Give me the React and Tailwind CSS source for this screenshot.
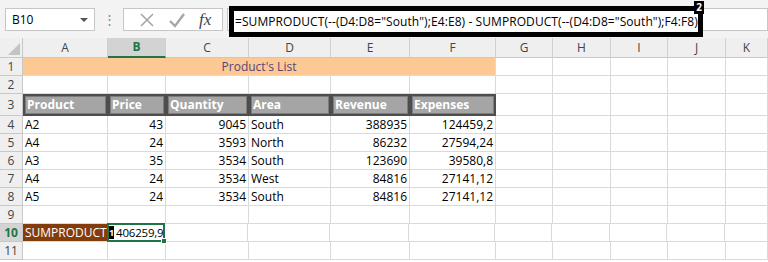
import React from 'react';

const colW = ['w-[85px]', 'w-[58px]', 'w-[83px]', 'w-[82px]', 'w-[79px]', 'w-[86px]', 'w-[57px]', 'w-[58px]', 'w-[57px]', 'w-[58px]', 'flex-1'];
const letters = ['A', 'B', 'C', 'D', 'E', 'F', 'G', 'H', 'I', 'J', 'K'];

const head = ['Product', 'Price', 'Quantity', 'Area', 'Revenue', 'Expenses'];
const data = [
  ['A2', '43', '9045', 'South', '388935', '124459,2'],
  ['A4', '24', '3593', 'North', '86232', '27594,24'],
  ['A3', '35', '3534', 'South', '123690', '39580,8'],
  ['A4', '24', '3534', 'West', '84816', '27141,12'],
  ['A5', '24', '3534', 'South', '84816', '27141,12'],
];
// text columns are left aligned, numbers right
const leftCol = [true, false, false, true, false, false];

const RowHead = ({ n, h = 'h-[18px]', active }) => (
  <div
    className={`w-[23px] shrink-0 ${h} flex items-center justify-center border-r border-b border-[#c8c8c8] text-[12px] ${
      active ? 'bg-[#d3d3d3] text-[#217346] font-bold' : 'bg-[#efefef] text-[#444]'
    }`}
  >
    {n}
  </div>
);

const Blank = ({ i }) => <div className={`${colW[i]} shrink-0 border-r border-b border-[#dadada]`} />;

export default function App() {
  return (
    <div className="w-[768px] h-[262px] overflow-hidden bg-white text-black" style={{ fontFamily: '"Open Sans", "Liberation Sans", sans-serif' }}>
      {/* formula bar area */}
      <div className="h-[38px] bg-[#f3f3f3] flex items-start pt-[8px] pl-[5px] relative">
        <div className="w-[90px] h-[23px] bg-white border border-[#c6c6c6] flex items-center justify-between pl-[6px] pr-[4px] text-[12px]">
          <span>B10</span>
          <span className="w-0 h-0 border-l-[4px] border-r-[4px] border-t-[4px] border-l-transparent border-r-transparent border-t-[#555] mr-[2px]" />
        </div>
        <div className="w-[28px] h-[23px] flex items-center justify-center text-[#888] text-[13px] leading-none">⋮</div>
        <div className="w-[100px] h-[23px] bg-white border border-[#c6c6c6] flex items-center justify-around pl-[8px] pr-[4px]">
          <svg width="16" height="16" viewBox="0 0 16 16">
            <path d="M2 2 L14 14 M14 2 L2 14" stroke="#a6a6a6" strokeWidth="1.6" fill="none" />
          </svg>
          <svg width="18" height="16" viewBox="0 0 18 16">
            <path d="M2 9 L7 14 L16 2" stroke="#a6a6a6" strokeWidth="2.4" fill="none" />
          </svg>
          <span className="italic text-[17px] text-[#444] leading-none" style={{ fontFamily: '"Liberation Serif", serif' }}>
            fx
          </span>
        </div>
        <div className="flex-1 h-[23px] ml-[4px] bg-white border border-[#c6c6c6] relative">
          <div className="absolute left-[1px] top-[-3px] w-[474px] h-[31px] border-[5px] border-black bg-white flex items-center pl-[1px] text-[12px] tracking-[0.08px] whitespace-nowrap">
            =SUMPRODUCT(--(D4:D8="South");E4:E8) - SUMPRODUCT(--(D4:D8="South");F4:F8)
          </div>
          <div className="absolute left-[466px] top-[-8px] w-[10px] h-[13px] bg-black text-white text-[10px] leading-[13px] text-center font-bold">2</div>
        </div>
      </div>

      {/* column headers */}
      <div className="flex h-[20px]">
        <div className="w-[23px] shrink-0 bg-[#efefef] border-r border-b border-[#c8c8c8] relative">
          <svg className="absolute right-[2px] bottom-[2px]" width="12" height="12" viewBox="0 0 12 12">
            <path d="M12 0 L12 12 L0 12 Z" fill="#c4c4c4" />
          </svg>
        </div>
        {letters.map((l, i) => (
          <div
            key={l}
            className={`${colW[i]} shrink-0 flex items-center justify-center text-[12px] border-r border-[#d0d0d0] ${
              l === 'B' ? 'bg-[#d3d3d3] text-[#217346] font-bold border-b-2 border-b-[#217346]' : 'bg-[#efefef] text-[#444] border-b border-b-[#c8c8c8]'
            }`}
          >
            {l}
          </div>
        ))}
      </div>

      {/* row 1 */}
      <div className="flex h-[18px]">
        <RowHead n={1} />
        <div className="w-[473px] shrink-0 bg-[#fcc995] border-r border-b border-[#dadada] flex items-center justify-center text-[12px] text-[#584377]">
          Product's List
        </div>
        {[6, 7, 8, 9, 10].map((i) => <Blank key={i} i={i} />)}
      </div>

      {/* row 2 */}
      <div className="flex h-[18px]">
        <RowHead n={2} />
        {letters.map((l, i) => <Blank key={l} i={i} />)}
      </div>

      {/* row 3 table head */}
      <div className="flex h-[22px]">
        <RowHead n={3} h="h-[22px]" />
        {head.map((t, i) => (
          <div
            key={t}
            className={`${colW[i]} shrink-0 bg-[#a5a5a5] border-2 border-[#4d4d4d] shadow-[inset_0_0_0_1px_#7c7c7c] flex items-center pl-[2px] text-white font-bold text-[12px]`}
          >
            {t}
          </div>
        ))}
        {[6, 7, 8, 9, 10].map((i) => <Blank key={i} i={i} />)}
      </div>

      {data.map((r, ri) => (
        <div key={ri} className="flex h-[18px]">
          <RowHead n={ri + 4} />
          {r.map((v, i) => (
            <div
              key={i}
              className={`${colW[i]} shrink-0 border-r border-b border-[#dadada] flex items-center text-[12px] px-[2px] ${
                leftCol[i] ? 'justify-start' : 'justify-end'
              }`}
            >
              {v}
            </div>
          ))}
          {[6, 7, 8, 9, 10].map((i) => <Blank key={i} i={i} />)}
        </div>
      ))}

      {/* row 9 */}
      <div className="flex h-[18px]">
        <RowHead n={9} />
        {letters.map((l, i) => <Blank key={l} i={i} />)}
      </div>

      {/* row 10 */}
      <div className="flex h-[18px]">
        <RowHead n={10} active />
        <div className="w-[85px] shrink-0 bg-[#843c0c] border-r border-b border-[#dadada] flex items-center pl-[2px] text-white text-[12px]">
          SUMPRODUCT
        </div>
        <div className="w-[58px] shrink-0 border-2 border-[#217346] flex items-center gap-[2px] text-[12px] relative -ml-[1px] -mt-[1px] h-[19px]">
          <span className="bg-black text-white text-[9px] font-bold w-[5px] h-[13px] leading-[13px] text-center shrink-0">1</span>
          <span className="text-[11.5px] tracking-[-0.2px] whitespace-nowrap">406259,9</span>
          <span className="absolute right-[-4px] bottom-[-4px] w-[6px] h-[6px] bg-[#217346] border border-white" />
        </div>
        {[2, 3, 4, 5, 6, 7, 8, 9, 10].map((i) => <Blank key={i} i={i} />)}
      </div>

      {/* row 11 */}
      <div className="flex h-[18px]">
        <RowHead n={11} />
        {letters.map((l, i) => <Blank key={l} i={i} />)}
      </div>
    </div>
  );
}
